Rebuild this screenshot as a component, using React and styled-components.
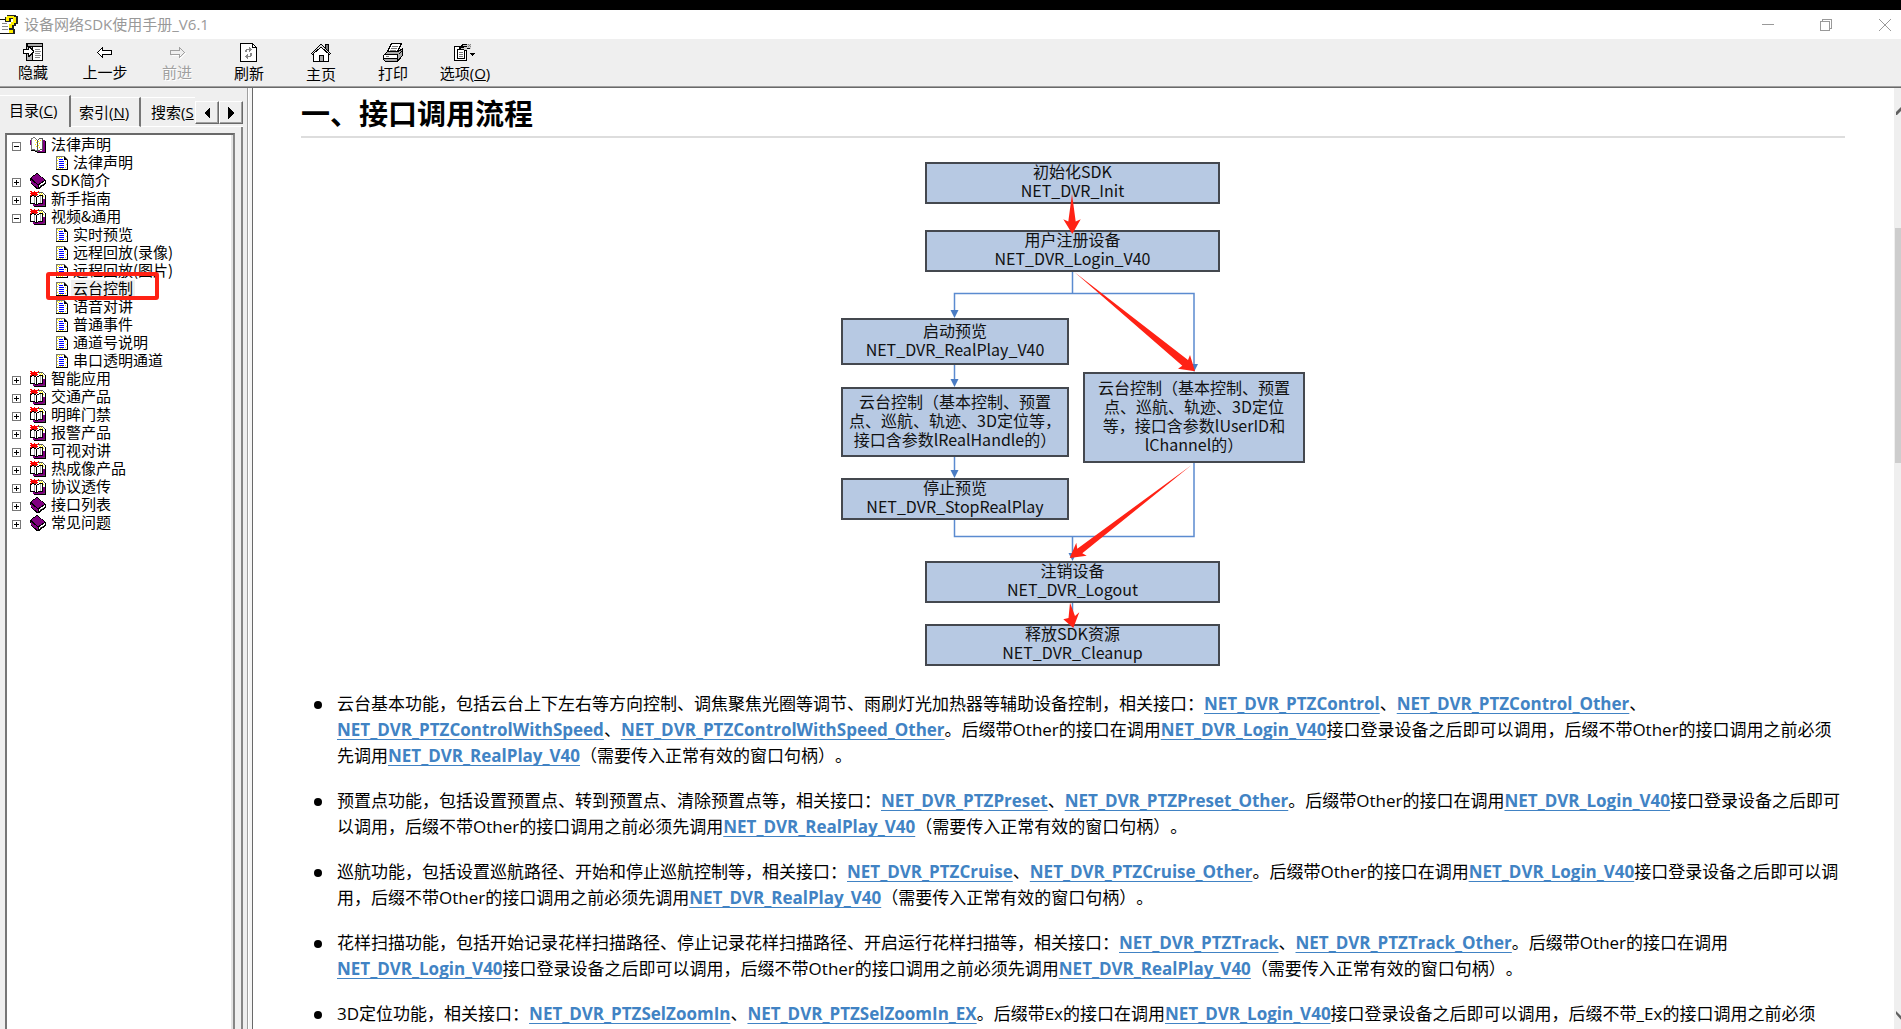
import React, { useState } from "react";
import styled, { createGlobalStyle } from "styled-components";

const GlobalStyle = createGlobalStyle`
  * { box-sizing: border-box; }
  body {
    margin: 0;
    overflow: hidden;
    background: #fff;
    font-family: "Open Sans", "Noto Sans CJK SC", sans-serif;
    font-size: 15px;
    color: #000;
    text-spacing-trim: space-all;
  }
  button {
    margin: 0;
    padding: 0;
    border: 0;
    background: none;
    font: inherit;
    color: inherit;
  }
`
const Page = styled.div`
  display: flex;
  flex-direction: column;
  height: 100vh;
  border-top: 10px solid #000;
`
const TitleBar = styled.header`
  display: flex;
  align-items: center;
  height: 29px;
  flex: none;
  background: #fff;
  color: #999;
`
const WindowTitle = styled.span`
  flex: 1;
  margin-left: 4px;
  padding-bottom: 2px;
  line-height: 26px;
`
const WindowButtons = styled.div`
  display: flex;
  padding-right: 1px;
  button {
    display: flex;
    justify-content: center;
    width: 58px;
  }
  button:last-child {
    width: 30px;
    margin-left: 15px;
  }
`
const ToolbarLine = styled.div`
  flex: none;
  background: #efefef;
  border-bottom: 1px solid #696969;
`
const Toolbar = styled.nav`
  display: flex;
  height: 48px;
  padding-top: 3px;
  margin-left: -3px;
  border-bottom: 1px solid #a0a0a0;
`
const ToolButton = styled.button`
  display: flex;
  flex-direction: column;
  align-items: center;
  width: 72px;
  line-height: 22px;
  color: ${({ disabled }) => disabled ? "#a0a0a0" : "#000"};
  text-shadow: ${({ disabled }) => disabled ? "1px 1px 0 #fff" : "none"};
  svg { margin-top: 1px; }
`
const Body = styled.div`
  display: flex;
  flex: 1;
  min-height: 0;
`
const Sidebar = styled.aside`
  display: flex;
  flex-direction: column;
  width: 248px;
  flex: none;
  background: #efefef;
  border-right: 1px solid #a0a0a0;
`
const Splitter = styled.div`
  width: 4px;
  flex: none;
  background: #f4f4f4;
  border-left: 1px solid #fff;
`
const TabRow = styled.div`
  display: flex;
  align-items: flex-end;
  height: 39px;
  flex: none;
  padding-right: 4px;
`
const Tab = styled.button`
  flex: ${({ $clipped }) => $clipped ? "1 1 0" : "none"};
  min-width: 0;
  overflow: hidden;
  white-space: nowrap;
  text-align: left;
  width: ${({ $active }) => $active ? "71px" : "70px"};
  height: ${({ $active }) => $active ? "32px" : "30px"};
  padding: ${({ $active }) => $active ? "0 0 4px 9px" : "0 0 0 8px"};
  padding-left: ${({ $clipped }) => $clipped && "10px"};
  line-height: 26px;
  border-top: 1px solid #fff;
  border-right: ${({ $clipped }) => $clipped ? "0" : "2px solid #767676"};
  border-bottom: ${({ $active }) => $active ? "0" : "1px solid #fff"};
`
const TabSpin = styled.div`
  display: flex;
  align-self: stretch;
  align-items: flex-end;
  padding-bottom: 2px;
  border-bottom: 1px solid #fff;
  button {
    display: flex;
    align-items: center;
    justify-content: center;
    width: 24px;
    height: 23px;
    border: 1px solid;
    border-color: #fff #696969 #696969 #fff;
    box-shadow: inset -1px -1px 0 #a0a0a0;
  }
`
const TabPage = styled.div`
  display: flex;
  flex: 1;
  min-height: 0;
  margin-right: 4px;
  padding: 6px 6px 0 5px;
  border-right: 2px solid #868686;
`
const Tree = styled.ul`
  flex: 1;
  margin: 0;
  padding: 1px 0 0;
  overflow: hidden;
  list-style: none;
  background: #fff;
  border: solid;
  border-width: 2px 2px 0 2px;
  border-color: #696969 #868686 #696969 #767676;
  box-shadow: inset -2px 0 0 #e3e3e3;
  font-family: "Noto Sans CJK SC", sans-serif;
`
const TreeRow = styled.li`
  position: relative;
  display: flex;
  align-items: center;
  gap: 3px;
  height: 18px;
  padding-left: ${({ $child }) => $child ? "49px" : "5px"};
  white-space: nowrap;
`
const Expander = styled.button`
  display: flex;
  margin: 2px 6px 0 0;
`
const TreeLabel = styled.span`
  padding: 0 2px 2px;
  line-height: 16px;
  background: ${({ $selected }) => $selected ? "#efefef" : "transparent"};
`
/* red frame drawn round the selected topic */
const Highlight = styled.span`
  position: absolute;
  z-index: 1;
  top: -8px;
  left: 39px;
  width: 113px;
  height: 28px;
  border: 4px solid #ff2215;
  border-radius: 3px;
`
const Doc = styled.main`
  flex: 1;
  min-width: 0;
  overflow: hidden;
  background: #fff;
  padding: 6px 49px 0 48px;
  border-left: 1px solid #696969;
`
const Heading = styled.h1`
  margin: 0;
  padding-bottom: 2px;
  border-bottom: 2px solid #ddd;
  font-size: 29px;
  line-height: 40px;
`
const Flow = styled.div`
  position: relative;
  width: 464px;
  height: 505px;
  margin: 24px auto 0;
  font-family: "Noto Sans CJK SC", sans-serif;
  font-size: 16px;
  line-height: 19px;
  svg {
    position: absolute;
    top: 0;
    left: 0;
  }
`
const FlowNode = styled.div`
  position: absolute;
  display: flex;
  flex-direction: column;
  align-items: center;
  justify-content: center;
  left: ${({ $x }) => $x}px;
  top: ${({ $y }) => $y}px;
  width: ${({ $w }) => $w}px;
  height: ${({ $h }) => $h}px;
  padding-bottom: 4px;
  background: #b7c9e3;
  border: 2px solid #44484f;
  white-space: nowrap;
  color: #111;
`
const Bullets = styled.ul`
  display: flex;
  flex-direction: column;
  gap: 19px;
  margin: 24px 0 0;
  padding: 0 0 0 13px;
  list-style: none;
  font-size: 17px;
  line-height: 26px;
`
const Bullet = styled.li`
  display: flex;
  gap: 15px;
  &::before {
    content: "";
    flex: none;
    width: 8px;
    height: 8px;
    margin-top: 10px;
    border-radius: 50%;
    background: #000;
  }
  p { margin: 0; }
`
const DocLink = styled.a`
  color: #4183c4;
  font-weight: 700;
  text-decoration: underline 1px;
  text-underline-offset: 3px;
  text-decoration-skip-ink: none;
`
const ScrollBar = styled.div`
  display: flex;
  flex-direction: column;
  justify-content: space-between;
  position: relative;
  width: 7px;
  flex: none;
  padding: 16px 0 8px 2px;
  background: #efefef;
`
const Thumb = styled.div`
  position: absolute;
  top: 140px;
  left: 1px;
  right: 0;
  height: 235px;
  background: #cdcdcd;
`

const Svg = ({ w, h, children }) => (
  <svg width={w} height={h} viewBox={`0 0 ${w} ${h}`} shapeRendering="crispEdges" aria-hidden="true">
    {children}
  </svg>
)

const HelpIcon = () => (
  <Svg w={20} h={20}>
    <path d="M0 4h6v14h-6z" fill="#fff" />
    <path d="M0 4h6v1h-6zM0 18h12v1h-12zM10 14h1v4h-1z" fill="#111" />
    <path d="M2 8h5v1h-5zM2 11h6v1h-6zM2 14h6v1h-6z" fill="#888" />
    <path d="M7 0h9v1h2v8h-2v2h-2v3h1v5h-6v-9h3v-2h2v-4h-3v3h-6v-5h2z" fill="#222" />
    <path d="M7 1h7v1h2v6h-2v2h-2v3h-3v-4h2v-2h2v-4h-4v3h-3v-4h1zM9 15h4v3h-4z" fill="#ffee00" />
  </Svg>
)
const HideIcon = () => (
  <Svg w={20} h={18}>
    <path d="M3 0h17v18h-17z" fill="#000" />
    <path d="M5 1h14v2h-14z" fill="#aaa" />
    <path d="M4 4h5v13h-5z" fill="#bbb" />
    <path d="M10 4h9v13h-9z" fill="#fff" />
    <path d="M12 6h5v1h-5zM12 8h6v1h-6zM12 10h5v1h-5zM12 12h6v1h-6zM12 14h5v1h-5z" fill="#888" />
    <path d="M0 6h5v-3h1l5 5v1l-5 5h-1v-3h-5z" fill="#000" />
    <path d="M1 7h5v-2l4 4l-4 3v-2h-5z" fill="#fff" />
  </Svg>
)
const BackIcon = () => (
  <Svg w={20} h={18}>
    <path d="M2.500 9.500L7.500 4.500V7.500H16.500V11.500H7.500V14.500Z" fill="#fff" stroke="#000" />
  </Svg>
)
const ForwardIcon = () => (
  <Svg w={20} h={18}>
    <path d="M18.500 10.500L13.500 15.500V12.500H4.500" fill="none" stroke="#fff" />
    <path d="M17.500 9.500L12.500 4.500V7.500H3.500V11.500H12.500V14.500Z" fill="none" stroke="#a0a0a0" />
  </Svg>
)
const RefreshIcon = () => (
  <Svg w={18} h={19}>
    <path d="M.5.5H12.500L16.500 4.500V18.500H.5Z" fill="#fff" stroke="#000" />
    <path d="M12.500 .5V4.500H16.500" fill="none" stroke="#000" />
    <path d="M5 9v-2h1v-1h3v-2h1v1h1v1h1v1h-1v1h-1v1h-1v-2h-2v2zM12 10v3h-1v1h-3v2h-1v-1h-1v-1h-1v-1h1v-1h1v-1h1v2h2v-3z" fill="#888" />
  </Svg>
)
const HomeIcon = () => (
  <Svg w={20} h={20}>
    <path d="M14 1h3v7h-3z" fill="#777" stroke="#000" />
    <path d="M2.500 10.500V18.500H17.500V10.500L10 3Z" fill="#fff" stroke="#000" />
    <path d="M.5 10.500L10 1L19.500 10.500L18.500 11.500L10 4L1.500 11.500Z" fill="#ddd" stroke="#000" />
    <path d="M8.500 12.500H12.500V18.500H8.500Z" fill="#aaa" stroke="#000" />
  </Svg>
)
const PrintIcon = () => (
  <Svg w={21} h={19}>
    <path d="M8.500 .5H18.500L14.500 8.500H4.500Z" fill="#fff" stroke="#000" />
    <path d="M9 3h6v1h-6zM8 5h6v1h-6zM7 7h6v1h-6z" fill="#777" />
    <path d="M.5 12.500L4.500 8.500H15.500L19.500 5.500V12.500L14.500 18.500H2.500L.5 16.500Z" fill="#aaa" stroke="#000" />
    <path d="M1 12h13v3h-13z" fill="#fff" />
    <path d="M1 11h14v1h-14zM1 15h14v1h-14zM14 11h1v7h-1zM16 10l3-3v1l-3 3z" fill="#000" />
    <path d="M3 13h3v1h-3z" fill="#777" />
  </Svg>
)
const OptionsIcon = () => (
  <Svg w={22} h={19}>
    <path d="M.5 3.500H12.500V17.500H.5Z" fill="#fff" stroke="#000" />
    <path d="M3.500 6.500H10.500V15.500H3.500Z" fill="#fff" stroke="#000" />
    <path d="M5 9h4v1h-4zM5 11h4v1h-4zM5 13h4v1h-4z" fill="#777" />
    <path d="M5.500 3.500L8.500 .5H17V6H14L11 8L9 6H6Z" fill="#ccc" />
    <path d="M5 4h1v-1h1v-1h1v-1h5v1h-4v1h4v1h-3v1h-3v1h-2zM10 7h3v1h-3zM13 5h3v1h-3z" fill="#000" />
    <path d="M14 1h1v1h-1zM16 1h1v1h-1zM15 2h1v1h-1zM14 3h1v1h-1zM16 3h1v1h-1z" fill="#888" />
    <path d="M16 10h5v1h-1v1h-1v1h-1v-1h-1v-1h-1z" fill="#000" />
  </Svg>
)

const OpenBookIcon = () => (
  <Svg w={16} h={16}>
    <path d="M0 3h2v10h3v2h10v-12h-3v11h-7v-2h-4z" fill="#800080" />
    <path d="M12 3h3v12h-3z" fill="#800080" />
    <path d="M1.500 1.500L4.500 .5L7.500 3.500V14.500L4.500 12.500H1.500Z" fill="#fff" stroke="#777" />
    <path d="M7.500 14.500V3.500L9.500 1.500H12.500V12.500L10.500 12.500Z" fill="#fff" stroke="#555" />
    <path d="M5 3h1v1h-1zM6 5h1v1h-1zM5 7h1v1h-1zM6 9h1v1h-1zM8 4h1v1h-1zM9 6h1v1h-1zM8 8h1v1h-1zM10 3h1v1h-1zM9 10h1v1h-1z" fill="#ffee00" />
    <path d="M1 13h4v1h2v1h8v-11h1v12h-9v-1h-2v-1h-4z" fill="#000" />
  </Svg>
)
const BookIcon = () => (
  <Svg w={16} h={16}>
    <path d="M0 5L7 0L16 7V11L9 16H7L1 11Z" fill="#000" />
    <path d="M1 5L7 1L15 7L8 11Z" fill="#800080" />
    <path d="M9 12L15 8V10L9 14Z" fill="#fff" />
    <path d="M1 7L8 12V15L1 10Z" fill="#800080" />
    <path d="M10 12h1v1h-1zM12 11h1v1h-1z" fill="#888" />
  </Svg>
)
const NewBookIcon = () => (
  <Svg w={16} h={16}>
    <path d="M5.500 1.500H12.500L15.500 4.500V14.500H5.500Z" fill="#fff" stroke="#555" />
    <path d="M15 4h1v11h-1zM4 15h12v1h-12z" fill="#000" />
    <path d="M13 8h2v6h-2zM3 13h10v2h-10z" fill="#800080" />
    <path d="M.5 5.500L3.500 4.500L6.500 6.500V13.500L3.500 12.500H.5Z" fill="#fff" stroke="#000" />
    <path d="M6.500 6.500L9.500 4.500H12.500V12.500H9.500L6.500 13.500Z" fill="#fff" stroke="#000" />
    <path d="M4 6h1v6h-1zM10 5h1v7h-1z" fill="#aaa" />
    <path d="M9 2h1v1h-1zM11 2h1v1h-1zM10 3h1v1h-1zM12 3h1v1h-1zM13 5h1v1h-1z" fill="#ffee00" />
    <path d="M0 0h2v1h2v-1h1v1h3v-1h1v1h-1v1h-1v1h1v1h-1v1h-1v-1h-1v1h-1v-1h-2v1h-2v-1h1v-1h-1v-1h1v-1h-1z" fill="#ff0000" />
  </Svg>
)
const PageIcon = () => (
  <Svg w={12} h={14}>
    <path d="M0 0h8l4 4v10h-12z" fill="#777" />
    <path d="M1 1h7v3h3v9h-10z" fill="#fff" />
    <path d="M1 1h1v1h-1zM3 1h1v1h-1zM5 1h1v1h-1zM2 2h1v1h-1zM1 4h1v1h-1zM1 7h1v1h-1zM1 10h1v1h-1zM2 12h1v1h-1zM4 12h1v1h-1zM6 12h1v1h-1zM9 5h1v1h-1zM10 8h1v1h-1zM9 11h1v1h-1z" fill="#ffee00" />
    <path d="M3 3h4v1h-4zM3 5h5v1h-5zM3 7h5v1h-5zM3 9h5v1h-5zM3 11h5v1h-5z" fill="#0000ff" />
    <path d="M8 1h1v1h1v1h1v1h1v10h-12v-1h11v-9h-3z" fill="#000" />
  </Svg>
)

const ICONS = { open: OpenBookIcon, book: BookIcon, fresh: NewBookIcon }

const TOOLS = [
  { label: "隐藏", icon: HideIcon },
  { label: "上一步", icon: BackIcon },
  { label: "前进", icon: ForwardIcon, disabled: true },
  { label: "刷新", icon: RefreshIcon },
  { label: "主页", icon: HomeIcon },
  { label: "打印", icon: PrintIcon },
  { label: "选项", hotkey: "O", icon: OptionsIcon },
]

const TOPICS = [
  { label: "法律声明", icon: "open", children: ["法律声明"] },
  { label: "SDK简介", icon: "book" },
  { label: "新手指南", icon: "fresh" },
  {
    label: "视频&通用",
    icon: "fresh",
    children: ["实时预览", "远程回放(录像)", "远程回放(图片)", "云台控制", "语音对讲", "普通事件", "通道号说明", "串口透明通道"],
  },
  { label: "智能应用", icon: "fresh" },
  { label: "交通产品", icon: "fresh" },
  { label: "明眸门禁", icon: "fresh" },
  { label: "报警产品", icon: "fresh" },
  { label: "可视对讲", icon: "fresh" },
  { label: "热成像产品", icon: "fresh" },
  { label: "协议透传", icon: "fresh" },
  { label: "接口列表", icon: "book" },
  { label: "常见问题", icon: "book" },
]

const NODES = [
  { x: 84, y: 0, w: 295, h: 42, lines: ["初始化SDK", "NET_DVR_Init"] },
  { x: 84, y: 68, w: 295, h: 42, lines: ["用户注册设备", "NET_DVR_Login_V40"] },
  { x: 0, y: 156, w: 228, h: 47, lines: ["启动预览", "NET_DVR_RealPlay_V40"] },
  { x: 0, y: 225, w: 228, h: 70, lines: ["云台控制（基本控制、预置", "点、巡航、轨迹、3D定位等，", "接口含参数lRealHandle的）"] },
  { x: 242, y: 210, w: 222, h: 91, lines: ["云台控制（基本控制、预置", "点、巡航、轨迹、3D定位", "等，接口含参数lUserID和", "lChannel的）"] },
  { x: 0, y: 316, w: 228, h: 42, lines: ["停止预览", "NET_DVR_StopRealPlay"] },
  { x: 84, y: 399, w: 295, h: 42, lines: ["注销设备", "NET_DVR_Logout"] },
  { x: 84, y: 462, w: 295, h: 42, lines: ["释放SDK资源", "NET_DVR_Cleanup"] },
]

const Api = ({ name }) => <DocLink href={`#${name}`}>{name}</DocLink>

const TopicTree = () => {
  const [selected, setSelected] = useState("云台控制")
  const [opened, setOpened] = useState({ "法律声明": true, "视频&通用": true })
  const toggle = label => setOpened({ ...opened, [label]: !opened[label] })
  return <Tree>
    {
      TOPICS.map(topic => {
        const Icon = ICONS[topic.icon]
        const isOpen = opened[topic.label]
        return <React.Fragment key={ topic.label }>
          <TreeRow>
            <Expander aria-label={ topic.label } aria-expanded={ !!isOpen } onClick={ () => toggle(topic.label) }>
              <Svg w={9} h={9}>
                <path d="M.5.5H8.500V8.500H.5Z" fill="#fff" stroke="#777" />
                <path d={ isOpen ? "M2 4h5v1h-5z" : "M2 4h5v1h-5zM4 2h1v5h-1z" } fill="#000" />
              </Svg>
            </Expander>
            <Icon />
            <TreeLabel>{ topic.label }</TreeLabel>
          </TreeRow>
          {
            isOpen && topic.children?.map(child => (
              <TreeRow key={ child } $child onClick={ () => setSelected(child) }>
                <PageIcon />
                <TreeLabel $selected={ child === selected }>{ child }</TreeLabel>
                { child === selected && <Highlight /> }
              </TreeRow>
            ))
          }
        </React.Fragment>
      })
    }
  </Tree>
}

const FlowChart = () => (
  <Flow>
    {
      NODES.map(node => (
        <FlowNode key={ node.lines.join() } $x={ node.x } $y={ node.y } $w={ node.w } $h={ node.h }>
          { node.lines.map(line => <span key={ line }>{ line }</span>) }
        </FlowNode>
      ))
    }
    <svg width="464" height="505" viewBox="0 0 464 505" aria-hidden="true">
      <g fill="none" stroke="#5b8bd0" strokeWidth="1.500">
        <path d="M231.500 110V131.500M113.500 150V131.500H353V204" />
        <path d="M113.500 203V220M113.500 295V310" />
        <path d="M113.500 358V374.500H353V301M231.500 374.500V394M231.500 441V462" />
      </g>
      <g fill="#4a7cc4">
        <path d="M109.500 148H117.500L113.500 156ZM349 202H357L353 210ZM109.500 217H117.500L113.500 225Z" />
        <path d="M109.500 308H117.500L113.500 316ZM227.500 391H235.500L231.500 399Z" />
      </g>
      <g fill="#ff2215">
        <path d="M231 32L234.700 59.500L239.700 57.300L231.300 72L222.300 57.300L227.300 59.500Z" />
        <path d="M233.300 110L347 198L349 193L354 209.300L337 206.700L341.300 203.700Z" />
        <path d="M350.300 303.300L241.300 391.300L245.700 393.700L228.700 396L235.300 380.700L236.300 386.700Z" />
        <path d="M229 440.700L234 454L238.300 450.300L232.300 466L222.300 457.300L227.500 456Z" />
      </g>
    </svg>
  </Flow>
)

const App = () => (
  <Page>
    <GlobalStyle />
    <TitleBar>
      <HelpIcon />
      <WindowTitle>设备网络SDK使用手册_V6.1</WindowTitle>
      <WindowButtons>
        <button aria-label="最小化"><Svg w={12} h={12}><path d="M0 5h12v1h-12z" fill="#999" /></Svg></button>
        <button aria-label="还原">
          <Svg w={12} h={12}><path d="M.5 2.500H9.500V11.500H.5ZM2.500 2.500V.5H11.500V9.500H9.500" fill="none" stroke="#999" /></Svg>
        </button>
        <button aria-label="关闭">
          <svg width="12" height="12" viewBox="0 0 12 12"><path d="M0 0L12 12M12 0L0 12" stroke="#999" /></svg>
        </button>
      </WindowButtons>
    </TitleBar>
    <ToolbarLine>
      <Toolbar>
        {
          TOOLS.map(({ label, hotkey, icon: Icon, disabled }) => (
            <ToolButton key={ label } disabled={ disabled }>
              <Icon />
              <span>{ label }{ hotkey && <>(<u>{ hotkey }</u>)</> }</span>
            </ToolButton>
          ))
        }
      </Toolbar>
    </ToolbarLine>
    <Body>
      <Sidebar>
        <TabRow>
          <Tab $active>目录(<u>C</u>)</Tab>
          <Tab>索引(<u>N</u>)</Tab>
          <Tab $clipped>搜索(<u>S</u></Tab>
          <TabSpin>
            <button aria-label="向左"><Svg w={6} h={12}><path d="M6 0V12L0 6Z" fill="#000" /></Svg></button>
            <button aria-label="向右"><Svg w={6} h={12}><path d="M0 0V12L6 6Z" fill="#000" /></Svg></button>
          </TabSpin>
        </TabRow>
        <TabPage>
          <TopicTree />
        </TabPage>
      </Sidebar>
      <Splitter />
      <Doc>
        <Heading>一、接口调用流程</Heading>
        <FlowChart />
        <Bullets>
          <Bullet>
            <p>云台基本功能，包括云台上下左右等方向控制、调焦聚焦光圈等调节、雨刷灯光加热器等辅助设备控制，相关接口：<Api name="NET_DVR_PTZControl" />、<Api name="NET_DVR_PTZControl_Other" />、<Api name="NET_DVR_PTZControlWithSpeed" />、<Api name="NET_DVR_PTZControlWithSpeed_Other" />。后缀带Other的接口在调用<Api name="NET_DVR_Login_V40" />接口登录设备之后即可以调用，后缀不带Other的接口调用之前必须先调用<Api name="NET_DVR_RealPlay_V40" />（需要传入正常有效的窗口句柄）。</p>
          </Bullet>
          <Bullet>
            <p>预置点功能，包括设置预置点、转到预置点、清除预置点等，相关接口：<Api name="NET_DVR_PTZPreset" />、<Api name="NET_DVR_PTZPreset_Other" />。后缀带Other的接口在调用<Api name="NET_DVR_Login_V40" />接口登录设备之后即可以调用，后缀不带Other的接口调用之前必须先调用<Api name="NET_DVR_RealPlay_V40" />（需要传入正常有效的窗口句柄）。</p>
          </Bullet>
          <Bullet>
            <p>巡航功能，包括设置巡航路径、开始和停止巡航控制等，相关接口：<Api name="NET_DVR_PTZCruise" />、<Api name="NET_DVR_PTZCruise_Other" />。后缀带Other的接口在调用<Api name="NET_DVR_Login_V40" />接口登录设备之后即可以调用，后缀不带Other的接口调用之前必须先调用<Api name="NET_DVR_RealPlay_V40" />（需要传入正常有效的窗口句柄）。</p>
          </Bullet>
          <Bullet>
            <p>花样扫描功能，包括开始记录花样扫描路径、停止记录花样扫描路径、开启运行花样扫描等，相关接口：<Api name="NET_DVR_PTZTrack" />、<Api name="NET_DVR_PTZTrack_Other" />。后缀带Other的接口在调用<Api name="NET_DVR_Login_V40" />接口登录设备之后即可以调用，后缀不带Other的接口调用之前必须先调用<Api name="NET_DVR_RealPlay_V40" />（需要传入正常有效的窗口句柄）。</p>
          </Bullet>
          <Bullet>
            <p>3D定位功能，相关接口：<Api name="NET_DVR_PTZSelZoomIn" />、<Api name="NET_DVR_PTZSelZoomIn_EX" />。后缀带Ex的接口在调用<Api name="NET_DVR_Login_V40" />接口登录设备之后即可以调用，后缀不带_Ex的接口调用之前必须</p>
          </Bullet>
        </Bullets>
      </Doc>
      <ScrollBar>
        <svg width="5" height="12" viewBox="0 0 5 12"><path d="M0 8L6 2V6L1 11H0Z" fill="#606060" /></svg>
        <Thumb />
        <svg width="5" height="12" viewBox="0 0 5 12"><path d="M0 2L6 8V12L0 5Z" fill="#606060" /></svg>
      </ScrollBar>
    </Body>
  </Page>
)

export default App
